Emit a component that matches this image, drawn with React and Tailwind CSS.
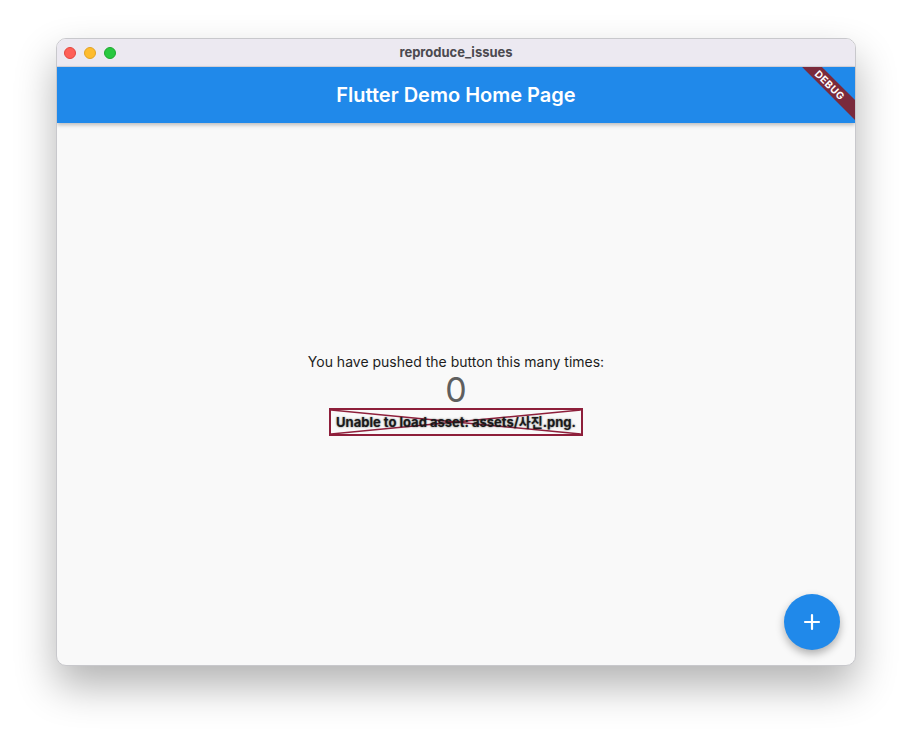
import { Plus } from 'lucide-react'

// ── Window chrome ─────────────────────────────────────────────────────────────
function TitleBar() {
  return (
    <div className="relative flex h-[28px] flex-shrink-0 items-center border-b border-[#d6d4db] bg-[#ece9f1] px-[7px]">
      <div className="flex gap-[8px]">
        <span className="h-[12px] w-[12px] rounded-full border border-[#e2463f] bg-[#fe5f57]" />
        <span className="h-[12px] w-[12px] rounded-full border border-[#e1a325] bg-[#febc2e]" />
        <span className="h-[12px] w-[12px] rounded-full border border-[#1ea82f] bg-[#28c840]" />
      </div>
      <div className="absolute inset-0 flex items-center justify-center text-[13px] font-bold text-[#4b4a4f]">
        reproduce_issues
      </div>
    </div>
  )
}

// ── Broken image placeholder (Flutter error widget) ──────────────────────────
function BrokenAsset() {
  return (
    <div className="relative border-2 border-[#8e1f3b] px-[5px] py-[3px]">
      <svg className="absolute inset-0 h-full w-full" preserveAspectRatio="none" viewBox="0 0 100 100">
        <line x1="0" y1="0" x2="100" y2="100" stroke="#8e1f3b" strokeWidth="1.5" vectorEffect="non-scaling-stroke" />
        <line x1="100" y1="0" x2="0" y2="100" stroke="#8e1f3b" strokeWidth="1.5" vectorEffect="non-scaling-stroke" />
      </svg>
      <span className="relative block text-[13px] font-bold leading-[18px] text-[#1a1a1a] [text-shadow:0_0_2px_rgba(0,0,0,0.6)]">
        Unable to load asset: assets/사진.png.
      </span>
    </div>
  )
}

export default function App() {
  return (
    <div
      className="flex h-[740px] w-[912px] items-start justify-center bg-white pt-[38px]"
      style={{ fontFamily: 'Inter, "Noto Sans", "Noto Sans CJK KR", sans-serif' }}
    >
      <div className="flex h-[628px] w-[800px] flex-col overflow-hidden rounded-[10px] border border-[#c8c8cc] bg-[#f9f9f9] shadow-[0_20px_40px_rgba(0,0,0,0.3)]">
        <TitleBar />

        <div className="relative flex flex-1 flex-col">
          {/* App bar */}
          <div className="relative z-10 flex h-[56px] flex-shrink-0 items-center justify-center bg-[#2089ea] shadow-[0_2px_4px_rgba(0,0,0,0.25)]">
            <span className="text-[20px] font-semibold text-white">Flutter Demo Home Page</span>
          </div>

          {/* Body */}
          <div className="flex flex-1 flex-col items-center justify-center">
            <div className="text-[14px] leading-[20px] text-[#1d1d1d]">You have pushed the button this many times:</div>
            <div className="text-[34px] leading-[36px] text-[#5f5f5f]">0</div>
            <BrokenAsset />
          </div>

          {/* FAB */}
          <button
            type="button"
            className="absolute bottom-[15px] right-[15px] z-10 flex h-[56px] w-[56px] items-center justify-center rounded-full bg-[#2089ea] text-white shadow-[0_4px_8px_rgba(0,0,0,0.3)]"
          >
            <Plus className="h-[24px] w-[24px]" strokeWidth={2.2} />
          </button>

          {/* Debug banner */}
          <div className="pointer-events-none absolute right-0 top-0 z-20 h-[56px] w-[56px] overflow-hidden">
            <div className="absolute right-[-30px] top-[11px] w-[110px] rotate-45 bg-[#7a2a3c] text-center text-[10px] font-bold leading-[14px] tracking-[0.5px] text-white">
              DEBUG
            </div>
          </div>
        </div>
      </div>
    </div>
  )
}
